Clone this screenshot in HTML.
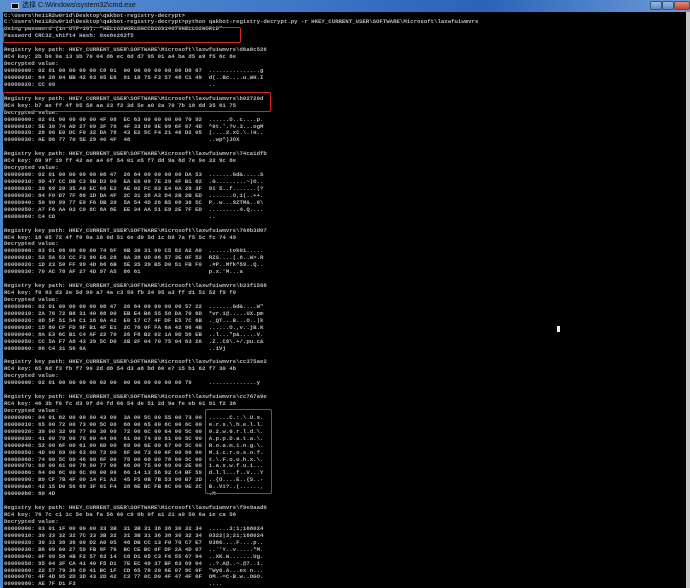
<!DOCTYPE html>
<html><head><meta charset="utf-8"><style>
html,body{margin:0;padding:0;background:#000;}
body{width:690px;height:588px;position:relative;overflow:hidden;}
#title{position:absolute;left:0;top:0;width:690px;height:12px;background:linear-gradient(90deg,#5b8fd0 0%,#3f79c8 40%,#2a63b8 70%,#6b9bd8 100%);}
#title .t{position:absolute;left:22px;top:0px;font:7px/12px "Liberation Sans","Noto Sans CJK SC",sans-serif;color:#111;}
#title .ic{position:absolute;left:11px;top:3px;width:8px;height:6px;background:#000;border:1px solid #ccc;box-sizing:border-box;}
.btn{position:absolute;top:1px;height:9px;border:1px solid #456;border-radius:2px;box-sizing:border-box;}
#lb{position:absolute;left:0;top:12px;width:3px;height:576px;background:#4a86cc;}
#rb{position:absolute;left:686px;top:12px;width:4px;height:576px;background:#c8c8c8;}
pre{position:absolute;left:4px;top:12.5px;margin:0;font-family:"Liberation Mono",monospace;font-size:5.7px;line-height:6.94px;color:#b8b8b8;font-weight:bold;white-space:pre;}
.box{position:absolute;border:1.5px solid #d42a22;border-radius:2px;box-sizing:border-box;}
</style></head><body>
<div id="title"><div class="ic"></div><div class="t">选择 C:\Windows\system32\cmd.exe</div>
<div class="btn" style="left:650px;width:12px;background:linear-gradient(#9bbbe6,#5d88c6)"></div>
<div class="btn" style="left:662px;width:12px;background:linear-gradient(#9bbbe6,#5d88c6)"></div>
<div class="btn" style="left:674px;width:16px;background:linear-gradient(#e88a78,#c8412c)"></div>
</div>
<div id="lb"></div><div id="rb"></div>
<pre>C:\Users\he11R2w0r1d\Desktop\qakbot-registry-decrypt>
C:\Users\he11R2w0r1d\Desktop\qakbot-registry-decrypt>python qakbot-registry-decrypt.py -r HKEY_CURRENT_USER\SOFTWARE\Microsoft\laxwfuiwmvrs
Using password (in UTF-16): "HELLO2WORLDNCCD18914679HELLO2WORLD"
Password CRC32_shift4 Hash: 0xe8e262f5

Registry key path: HKEY_CURRENT_USER\SOFTWARE\Microsoft\laxwfuiwmvrs\d6a8c526
RC4 key: 2b b0 9a 13 3b 70 04 d6 ec 8d d7 95 01 a4 ba d5 a9 f5 6c 8e
Decrypted value:
00000000: 02 01 00 00 00 00 C8 01  00 00 00 00 00 00 D8 67  ...............g
00000010: 64 28 04 BB 42 63 05 E6  91 18 75 F3 57 48 C1 49  d(..Bc....u.WH.I
00000020: CC 09                                             ..

Registry key path: HKEY_CURRENT_USER\SOFTWARE\Microsoft\laxwfuiwmvrs\b02720d
RC4 key: b7 ae ff 4f 95 58 aa 23 f2 3d 5e a0 2a 70 7b 18 dd 35 61 75
Decrypted value:
00000000: 02 01 00 00 00 00 4F 08  EC 63 00 00 00 00 70 92  ......O..c....p.
00000010: 5E 30 74 AD 27 09 3F 76  4F 33 D0 9E 09 6F 67 4D  ^0t.'.?v.3...ogM
00000020: 28 06 E0 DC F0 32 DA 78  43 E2 5C F4 21 48 D2 05  (....2.xC.\.!H..
00000030: AE D6 77 70 5E 29 40 4F  48                       ..wp^)JOX

Registry key path: HKEY_CURRENT_USER\SOFTWARE\Microsoft\laxwfuiwmvrs\74ca1dfb
RC4 key: 89 9f 19 ff 42 ae a4 0f 54 01 e5 f7 dd 9a 8d 7e 9e 32 9c 8e
Decrypted value:
00000000: 02 01 00 00 00 00 08 47  26 64 00 00 00 00 DA 53  .......Gd&.....S
00000010: 9D 47 CC DB C3 9B D3 00  EA E6 09 7E 29 4F B1 82  .G.........~)O..
00000020: 39 69 20 35 A9 EC 66 E2  AE 02 FC 03 E4 0A 28 3F  9i 5..f.......(?
00000030: 84 F0 D7 7F 86 1D DA 4F  2C 31 28 A3 D4 2B 2B ED  .......O,1(..++.
00000040: 50 90 99 77 E9 F6 DB 39  5A 54 4D 26 B5 08 36 5C  P..w...9ZTM&..6\
00000050: A7 F6 AA 03 C0 8C 8A 8E  EE 34 AA 51 E9 2E 7F ED  .........4.Q....
00000060: C4 CD                                             ..

Registry key path: HKEY_CURRENT_USER\SOFTWARE\Microsoft\laxwfuiwmvrs\768b3d07
RC4 key: 18 05 72 4f f0 8a 18 0d 51 6e d0 5d 1c b9 7a f5 5c fc 74 49
Decrypted value:
00000000: 03 01 06 00 00 00 74 6F  6B 30 31 00 C5 82 A2 A0  ......tok01.....
00000010: 52 5A 53 CC F3 90 E6 28  0A 38 0D 06 57 3E 0F 52  RZS....(.8..W>.R
00000020: 1D 23 50 FF 99 4D 66 6B  5E 35 39 B5 D0 51 FB F0  .#P..Mfk^59..Q..
00000030: 70 AC 78 AF 27 4D 97 A5  86 61                    p.x.'M...a

Registry key path: HKEY_CURRENT_USER\SOFTWARE\Microsoft\laxwfuiwmvrs\b33f1568
RC4 key: f0 83 d3 2e 5d 90 a7 4a c3 50 fb 24 95 a3 ff d1 51 52 f9 f0
Decrypted value:
00000000: 02 01 00 00 00 00 08 47  26 64 00 00 00 00 57 22  .......Gd&....W"
00000010: 2A 76 72 B8 31 40 88 00  EB E4 B8 55 58 DA 70 6D  *vr.1@.....UX.pm
00000020: 0D 5F 51 54 C1 16 0A 42  E0 17 C7 4F DF E5 7C 6B  ._QT...B...O..|k
00000030: 15 80 CF FD 9F B1 4F E1  2C 76 0F FA 6A 42 96 4B  ......O.,v..jB.K
00000040: 8A E3 6C B1 C4 AF 22 70  26 F8 B2 02 1A 9D 56 EB  ..l..."p&.....V.
00000050: CC 5A F7 A8 43 39 5C D0  2B 2F 04 70 75 04 63 26  .Z..C9\.+/.pu.c&
00000060: 86 C4 31 56 6A                                    ..1Vj

Registry key path: HKEY_CURRENT_USER\SOFTWARE\Microsoft\laxwfuiwmvrs\cc375ae2
RC4 key: 65 8d f3 fb f7 90 2d d8 54 d3 a8 bd 60 e7 15 b1 62 f7 30 4b
Decrypted value:
00000000: 02 01 00 00 00 00 02 00  00 00 00 00 00 00 79     ..............y

Registry key path: HKEY_CURRENT_USER\SOFTWARE\Microsoft\laxwfuiwmvrs\cc767a9e
RC4 key: 46 3b f6 fc d3 9f d4 fd 66 54 de 51 2d 9a fe eb 01 91 f2 36
Decrypted value:
00000000: 04 01 82 00 00 00 43 00  3A 00 5C 00 55 00 73 00  ......C.:.\.U.s.
00000010: 65 00 72 00 73 00 5C 00  68 00 65 00 6C 00 6C 00  e.r.s.\.h.e.l.l.
00000020: 30 00 32 00 77 00 30 00  72 00 6C 00 64 00 5C 00  0.2.w.0.r.l.d.\.
00000030: 41 00 70 00 70 00 44 00  61 00 74 00 61 00 5C 00  A.p.p.D.a.t.a.\.
00000040: 52 00 6F 00 61 00 6D 00  69 00 6E 00 67 00 5C 00  R.o.a.m.i.n.g.\.
00000050: 4D 00 69 00 63 00 72 00  6F 00 73 00 6F 00 66 00  M.i.c.r.o.s.o.f.
00000060: 74 00 5C 00 46 00 6F 00  75 00 68 00 78 00 5C 00  t.\.F.o.u.h.x.\.
00000070: 69 00 61 00 78 00 77 00  66 00 75 00 69 00 2E 00  i.a.x.w.f.u.i...
00000080: 64 00 6C 00 6C 00 00 00  66 14 13 56 92 C4 BF 59  d.l.l...f..V...Y
00000090: B9 CF 7B 4F 00 14 F1 A2  45 F5 0B 7B 53 00 B7 2D  ..{O....E..{S..-
000000a0: 42 15 D0 56 69 3F 01 F4  28 8E BC FB 8C 00 0E 2C  B..Vi?..(......,
000000b0: 80 4D                                             .M

Registry key path: HKEY_CURRENT_USER\SOFTWARE\Microsoft\laxwfuiwmvrs\f9e9aad0
RC4 key: 76 7c c1 1c 5e ba fa 56 60 c9 0b 0f a1 21 a0 50 6a 1e ca 56
Decrypted value:
00000000: 03 01 1F 00 00 00 33 3B  31 3B 31 36 38 30 32 34  ......3;1;168024
00000010: 30 33 32 32 7C 33 3B 32  31 3B 31 36 38 30 32 34  0322|3;21;168024
00000020: 30 33 38 36 00 D2 A0 05  46 DB CC 13 F0 70 C7 E7  0386....F....p..
00000030: B6 09 60 27 59 FB 9F 76  BC CE BC 0F DF 2A 4D 07  ..`'Y..v.....*M.
00000040: 0F 99 58 4B F2 57 83 14  C6 D1 05 C3 F6 55 67 94  ..XK.W.......Ug.
00000050: 95 04 3F CA 41 40 F5 D1  7E EC 40 37 BF 83 69 04  ..?.A@..~.@7..i.
00000060: 22 57 79 36 C8 41 BC 1F  CD 65 78 20 6E 07 9C 0F  "Wy6.A...ex n...
00000070: 4F 4D 95 2D 3D 43 2D 42  C3 77 0C D0 4F 47 4F 0F  OM.-=C-B.w..OGO.
00000080: AE 7F D1 F3                                       ....</pre>
<div class="box" style="left:3px;top:27px;width:238px;height:16px"></div>
<div class="box" style="left:3px;top:92px;width:268px;height:20px"></div>
<div class="box" style="left:205px;top:409px;width:67px;height:85px"></div>
<div style="position:absolute;left:557px;top:326px;width:3px;height:6px;background:#eee"></div>
</body></html>
